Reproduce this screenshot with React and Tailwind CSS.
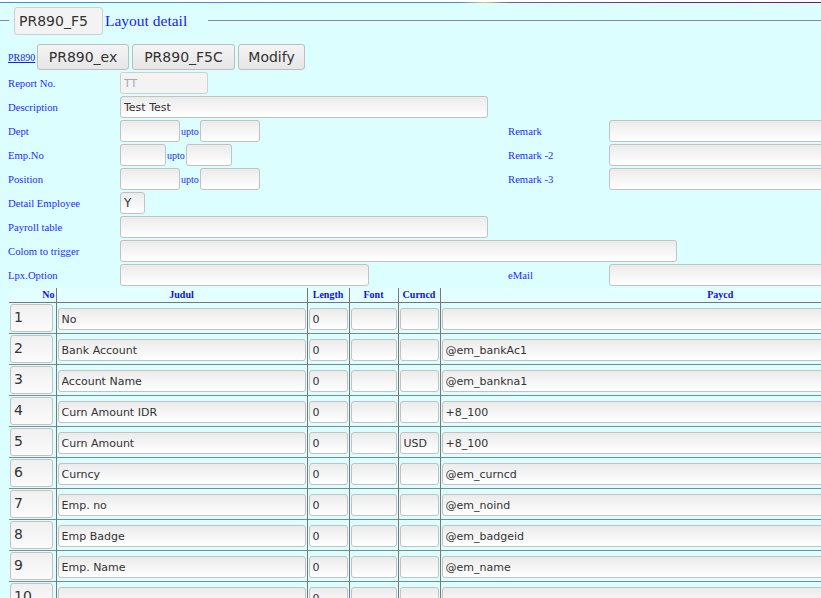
import React from 'react';

const sans = "font-['DejaVu_Sans',sans-serif]";
const serif = "font-['Liberation_Serif',serif]";
const label = `${serif} text-[10.7px] text-[#2a2aff] whitespace-nowrap`;

const Field = ({ w, value = '', big, className = '' }) => (
  <input
    readOnly
    value={value}
    className={`${w} shrink-0 h-[22px] border border-[#c2c2c2] rounded-[3px] bg-linear-to-b from-[#ebebeb] to-white px-[3px] text-[11px] text-[#333] outline-none ${sans} ${className}`}
  />
);

const Upto = () => <span className={`${serif} text-[10px] text-[#2a2aff] px-[1px]`}>upto</span>;

const Row = ({ name, children, rname }) => (
  <div className="flex items-center h-[24px]">
    <div className={`w-[120px] shrink-0 pl-[8px] ${label}`}>{name}</div>
    <div className="w-[388px] shrink-0 flex items-center">{children}</div>
    {rname && (
      <>
        <div className={`w-[101px] shrink-0 ${label}`}>{rname}</div>
        <Field w="w-[260px]" />
      </>
    )}
  </div>
);

const rows = [
  ['No', ''],
  ['Bank Account', '', '@em_bankAc1'],
  ['Account Name', '', '@em_bankna1'],
  ['Curn Amount IDR', '', '+8_100'],
  ['Curn Amount', 'USD', '+8_100'],
  ['Curncy', '', '@em_curncd'],
  ['Emp. no', '', '@em_noind'],
  ['Emp Badge', '', '@em_badgeid'],
  ['Emp. Name', '', '@em_name'],
  ['', '', ''],
];

const App = () => {
  return (
    <div className="min-h-screen w-full overflow-hidden bg-[#dcfefe]">
      {/* top strip */}
      <div className="h-[2px] bg-white" />
      <div className="h-px bg-[linear-gradient(to_right,#3c90e2_0%,#4a86dc_56%,#e6c46a_59%,#7a5aa8_62%,#6b2a8a_80%,#7c1464_100%)]" />

      {/* legend */}
      <div className="flex h-[36px] items-center">
        <div className="w-[9px] h-px bg-[#8a8a8a] self-start mt-[17px]" />
        <div className="w-[199px] shrink-0 flex items-center pl-[5px]">
          <div className={`w-[89px] h-[28px] border border-[#cfcfcf] rounded-[3px] bg-[#f3f3f3] flex items-center pl-[4px] text-[14px] text-[#333] ${sans}`}>
            PR890_F5
          </div>
          <span className={`${serif} text-[15.5px] text-[#1a1aff] ml-[2px]`}>Layout detail</span>
        </div>
        <div className="flex-1 h-px bg-[#8a8a8a] self-start mt-[17px]" />
      </div>

      {/* buttons */}
      <div className="flex items-center h-[26px] mt-[5px] pl-[8px]">
        <a href="#" className={`${serif} text-[10px] text-[#1a1aee] underline w-[29px]`}>PR890</a>
        {[['PR890_ex', 'w-[92px]'], ['PR890_F5C', 'w-[103px]'], ['Modify', 'w-[67px]']].map(([t, w]) => (
          <button
            key={t}
            className={`${w} h-[26px] mr-[3px] border border-[#bdbdbd] rounded-[3px] bg-linear-to-b from-[#f4f4f4] to-[#e6e6e6] text-[14px] text-[#333] ${sans}`}
          >
            {t}
          </button>
        ))}
      </div>

      {/* form */}
      <div className="mt-px">
        <Row name="Report No.">
          <input
            readOnly
            value="TT"
            className={`w-[88px] h-[22px] border border-[#cfcfcf] rounded-[3px] bg-[#f3f3f3] px-[3px] text-[11px] text-[#a8a8a8] outline-none ${sans}`}
          />
        </Row>
        <Row name="Description">
          <Field w="w-[368px]" value="Test Test" />
        </Row>
        <Row name="Dept" rname="Remark">
          <Field w="w-[60px]" />
          <Upto />
          <Field w="w-[60px]" />
        </Row>
        <Row name="Emp.No" rname="Remark -2">
          <Field w="w-[46px]" />
          <Upto />
          <Field w="w-[46px]" />
        </Row>
        <Row name="Position" rname="Remark -3">
          <Field w="w-[60px]" />
          <Upto />
          <Field w="w-[60px]" />
        </Row>
        <Row name="Detail Employee">
          <Field w="w-[25px]" value="Y" className="text-[12px]" />
        </Row>
        <Row name="Payroll table">
          <Field w="w-[368px]" />
        </Row>
        <Row name="Colom to trigger">
          <Field w="w-[557px]" />
        </Row>
        <Row name="Lpx.Option" rname="eMail">
          <Field w="w-[249px]" />
        </Row>
      </div>

      {/* table */}
      <table className="mt-px ml-[9px] border-collapse table-fixed w-[991px]">
        <thead>
          <tr className={`bg-[#e3ffff] h-[14px] ${serif} text-[10px] font-bold text-[#1010e6]`}>
            <th className="w-[47px] p-0 pr-[1px] text-right leading-[13px] border-r border-b border-[#777]">No</th>
            <th className="w-[251px] p-0 leading-[13px] border-r border-b border-[#777]">Judul</th>
            <th className="w-[42px] p-0 leading-[13px] border-r border-b border-[#777]">Length</th>
            <th className="w-[49px] p-0 leading-[13px] border-r border-b border-[#777]">Font</th>
            <th className="w-[42px] p-0 leading-[13px] border-r border-b border-[#777]">Curncd</th>
            <th className="w-[560px] p-0 leading-[13px] border-b border-[#777]">Paycd</th>
          </tr>
        </thead>
        <tbody>
          {rows.map(([judul, cur, pay], i) => (
            <tr key={i} className="h-[31px] border-b border-[#7d8b8b]">
              <td className="p-0 px-[1px] border-r border-[#777] align-middle">
                <div className={`w-[43px] h-[28px] border border-[#c2c2c2] rounded-[3px] bg-linear-to-b from-[#f0f0f0] to-[#fbfbfb] flex items-center pl-[3px] text-[14px] text-[#333] ${sans}`}>
                  {i + 1}
                </div>
              </td>
              <td className="p-0 px-[1px] border-r border-[#777]">
                <Field w="w-full" value={judul} />
              </td>
              <td className="p-0 px-[1px] border-r border-[#777]">
                <Field w="w-full" value="0" />
              </td>
              <td className="p-0 px-[1px] border-r border-[#777]">
                <Field w="w-full" />
              </td>
              <td className="p-0 px-[1px] border-r border-[#777]">
                <Field w="w-full" value={cur} />
              </td>
              <td className="p-0 px-[1px]">
                <Field w="w-full" value={pay || ''} />
              </td>
            </tr>
          ))}
        </tbody>
      </table>
    </div>
  );
};

export default App;
